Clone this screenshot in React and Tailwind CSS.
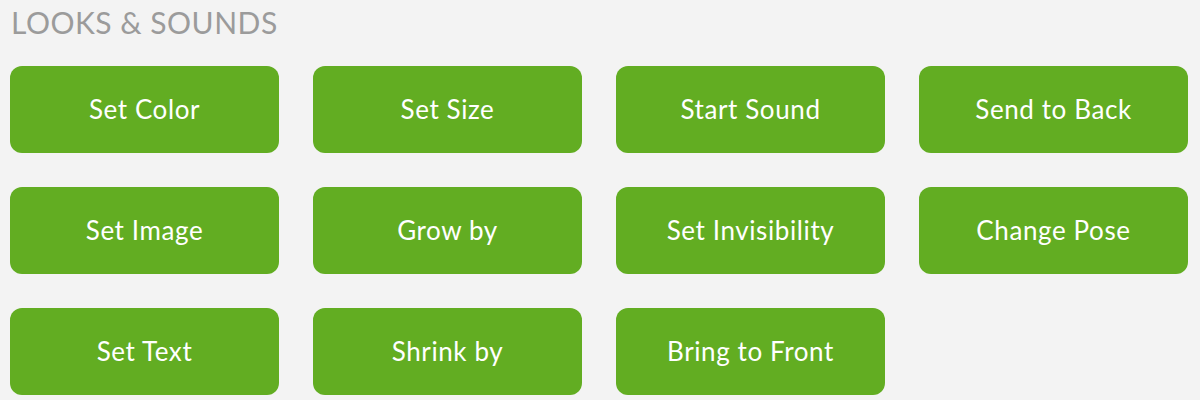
const items = [
  "Set Color",
  "Set Size",
  "Start Sound",
  "Send to Back",
  "Set Image",
  "Grow by",
  "Set Invisibility",
  "Change Pose",
  "Set Text",
  "Shrink by",
  "Bring to Front",
];

export default function App() {
  return (
    <div className="w-[1200px] h-[400px] bg-[#f3f3f3] overflow-hidden font-['Lato',sans-serif]">
      <h2 className="pl-[11px] pt-[3px] h-[66px] text-[30px] leading-[38px] text-[#9b9b9b] tracking-[0.5px]">
        LOOKS &amp; SOUNDS
      </h2>
      <div className="grid grid-cols-[repeat(4,269px)] gap-[34px] pl-[10px]">
        {items.map((label) => (
          <button
            key={label}
            className="h-[87px] rounded-[12px] bg-[#62ad22] text-white text-[26px] tracking-[0.6px] flex items-center justify-center"
          >
            {label}
          </button>
        ))}
      </div>
    </div>
  );
}
